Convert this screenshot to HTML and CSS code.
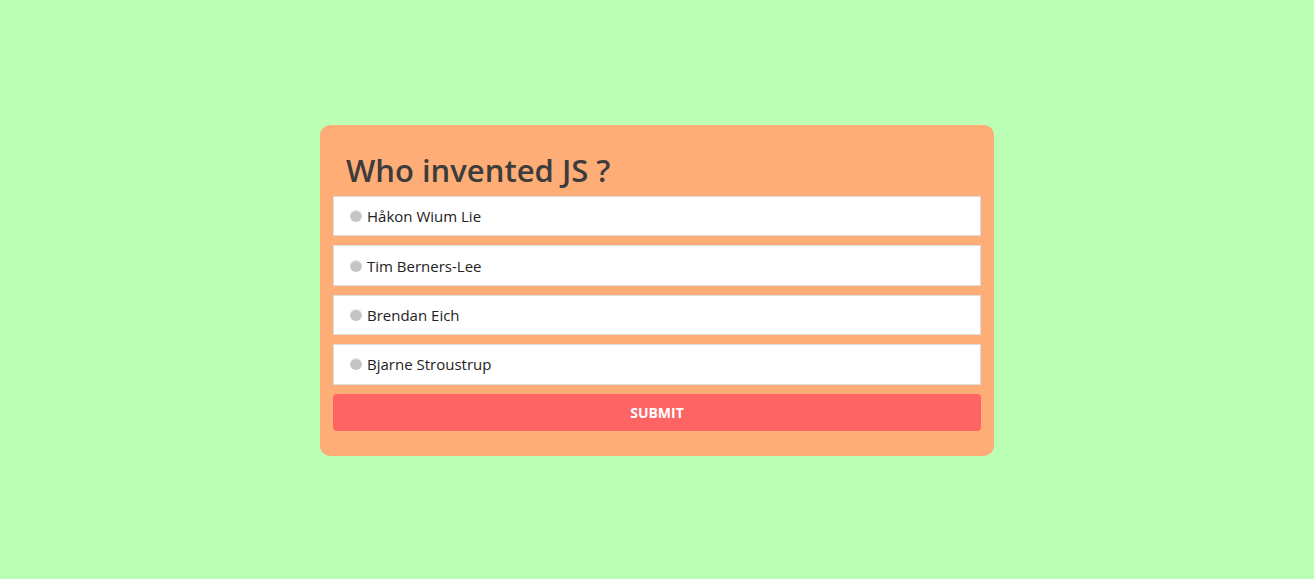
FILE: index.html
```html
<!DOCTYPE html>
<html lang="en">
<head>
    <meta charset="UTF-8">
    <meta name="viewport" content="width=device-width, initial-scale=1.0">
    <title>Quiz</title>
    <link rel="stylesheet" href="styles.css">
</head>
<body>
    <div class="quiz-container">
        <h2 class="question">Who invented JS ?</h2>
        <ul class="answers">
            <li class="answer">
                <input type="radio" name="answer" id="a">
                <label for="a">Håkon Wium Lie</label>
            </li>
            <li class="answer">
                <input type="radio" name="answer" id="b">
                <label for="b">Tim Berners-Lee</label>
            </li>
            <li class="answer">
                <input type="radio" name="answer" id="c">
                <label for="c">Brendan Eich</label>
            </li>
            <li class="answer">
                <input type="radio" name="answer" id="d">
                <label for="d">Bjarne Stroustrup</label>
            </li>
        </ul>
        <button class="submit">Submit</button>
    </div>
</body>
</html>
```

FILE: styles.css
```css
body {
    font-family: "Open Sans", "Noto Sans", sans-serif;
    margin: 0;
    padding: 125px 0 0;
    display: flex;
    justify-content: center;
    background-color: #bbffb4;
}
.quiz-container {
    width: 674px;
    box-sizing: border-box;
    padding: 0 13px 25px;
    background-color: #ffad77;
    border-radius: 10px;
}
.question {
    margin: 25px 0 6px;
    padding-left: 13px;
    font-size: 31px;
    font-weight: 600;
    line-height: 40px;
    color: #3c3c3c;
}
.answers {
    list-style: none;
    margin: 0;
    padding: 0;
}
.answer {
    display: flex;
    align-items: center;
    height: 38.4px;
    margin-bottom: 9px;
    padding: 0 16px;
    background-color: #fff;
    border: 1px solid #dcdcdc;
    font-size: 15px;
    color: #222;
}
.answer input {
    appearance: none;
    flex-shrink: 0;
    width: 12px;
    height: 12px;
    margin: 0 5px 0 0;
    border: none;
    border-radius: 50%;
    background-color: #c4c4c4;
    box-shadow: inset 0 1px 0 #f2f2f2;
}
.submit {
    display: block;
    width: 100%;
    height: 37px;
    border: none;
    border-radius: 4px;
    background-color: #ff6464;
    color: #fff;
    font-family: inherit;
    font-size: 14px;
    font-weight: 700;
    text-transform: uppercase;
    cursor: pointer;
}
```
